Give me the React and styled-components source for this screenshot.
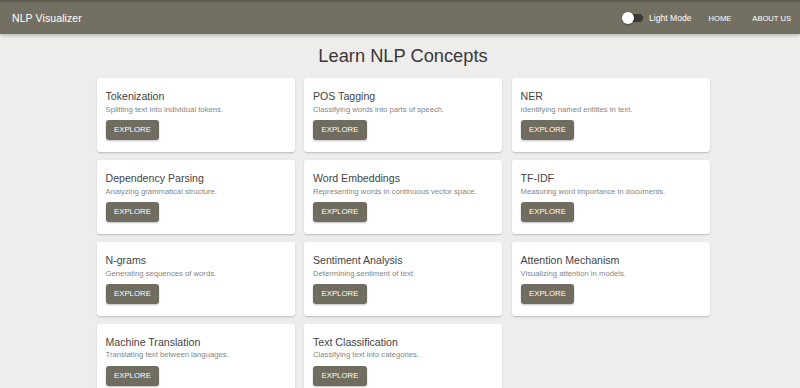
import styled, { createGlobalStyle } from "styled-components";

const GlobalStyle = createGlobalStyle`
  html, body {
    margin: 0;
    padding: 0;
    background-color: #eeedeb;
    font-family: "Liberation Sans", Arial, sans-serif;
  }
`;

const topics = [
  { title: "Tokenization", text: "Splitting text into individual tokens." },
  { title: "POS Tagging", text: "Classifying words into parts of speech." },
  { title: "NER", text: "Identifying named entities in text." },
  { title: "Dependency Parsing", text: "Analyzing grammatical structure." },
  { title: "Word Embeddings", text: "Representing words in continuous vector space." },
  { title: "TF-IDF", text: "Measuring word importance in documents." },
  { title: "N-grams", text: "Generating sequences of words." },
  { title: "Sentiment Analysis", text: "Determining sentiment of text." },
  { title: "Attention Mechanism", text: "Visualizing attention in models." },
  { title: "Machine Translation", text: "Translating text between languages." },
  { title: "Text Classification", text: "Classifying text into categories." },
];

const Page = styled.div`
  min-height: 388px;
`;

const AppBar = styled.header`
  display: flex;
  align-items: center;
  height: 34px;
  box-sizing: border-box;
  padding: 0 9px 0 12px;
  background-color: #737063;
  border-top: 2px solid #5f5c51;
  box-shadow: 0 2px 3px rgba(0, 0, 0, 0.2);
  color: #ffffff;
`;

const Brand = styled.div`
  flex: 1;
  font-size: 10.5px;
  letter-spacing: 0.1px;
`;

const Nav = styled.nav`
  display: flex;
  align-items: center;
`;

const ToggleWrap = styled.label`
  display: flex;
  align-items: center;
  gap: 6px;
  font-size: 8.6px;
  margin-right: 17px;
`;

const Track = styled.span`
  position: relative;
  display: inline-block;
  width: 19px;
  height: 8px;
  border-radius: 4px;
  background-color: #3a3935;
  margin-left: 2px;
`;

const Thumb = styled.span`
  position: absolute;
  left: -2px;
  top: -2px;
  width: 12px;
  height: 12px;
  border-radius: 50%;
  background-color: #ffffff;
  box-shadow: 0 1px 2px rgba(0, 0, 0, 0.35);
`;

const NavLink = styled.a`
  font-size: 7.6px;
  text-transform: uppercase;
  color: #ffffff;
  text-decoration: none;
  margin-left: ${({ $first }) => ($first ? "0" : "21px")};
`;

const Main = styled.main`
  display: flex;
  flex-direction: column;
  align-items: center;
  padding: 11px 0 0 6px;
`;

const Heading = styled.h1`
  margin: 0 0 11px;
  font-size: 18.3px;
  font-weight: 400;
  line-height: 1.2;
  color: #383838;
`;

const Grid = styled.div`
  display: grid;
  grid-template-columns: repeat(3, 198px);
  column-gap: 9.5px;
  row-gap: 8px;
`;

const Card = styled.div`
  background-color: #ffffff;
  border-radius: 3px;
  box-shadow: 0 1px 2px rgba(0, 0, 0, 0.16), 0 1px 1px rgba(0, 0, 0, 0.06);
  padding: 12px 9px 12px;
`;

const CardTitle = styled.h2`
  margin: 0 0 2px;
  font-size: 10.6px;
  font-weight: 400;
  line-height: 1.2;
  color: #444444;
`;

const CardText = styled.p`
  margin: 0 0 6px;
  font-size: 7.7px;
  line-height: 1.2;
  color: #858585;
`;

const Button = styled.button`
  display: block;
  height: 20px;
  padding: 0 8.5px;
  border: none;
  border-radius: 3px;
  background-color: #706c60;
  color: #ffffff;
  font-family: inherit;
  font-size: 7.8px;
  text-transform: uppercase;
  box-shadow: 0 1px 2px rgba(0, 0, 0, 0.25);
  cursor: pointer;
`;

export default function App() {
  return (
    <Page>
      <GlobalStyle />
      <AppBar>
        <Brand>NLP Visualizer</Brand>
        <Nav>
          <ToggleWrap>
            <Track>
              <Thumb />
            </Track>
            Light Mode
          </ToggleWrap>
          <NavLink $first href="#">Home</NavLink>
          <NavLink href="#">About Us</NavLink>
        </Nav>
      </AppBar>
      <Main>
        <Heading>Learn NLP Concepts</Heading>
        <Grid>
          {topics.map((t) => (
            <Card key={t.title}>
              <CardTitle>{t.title}</CardTitle>
              <CardText>{t.text}</CardText>
              <Button>Explore</Button>
            </Card>
          ))}
        </Grid>
      </Main>
    </Page>
  );
}
